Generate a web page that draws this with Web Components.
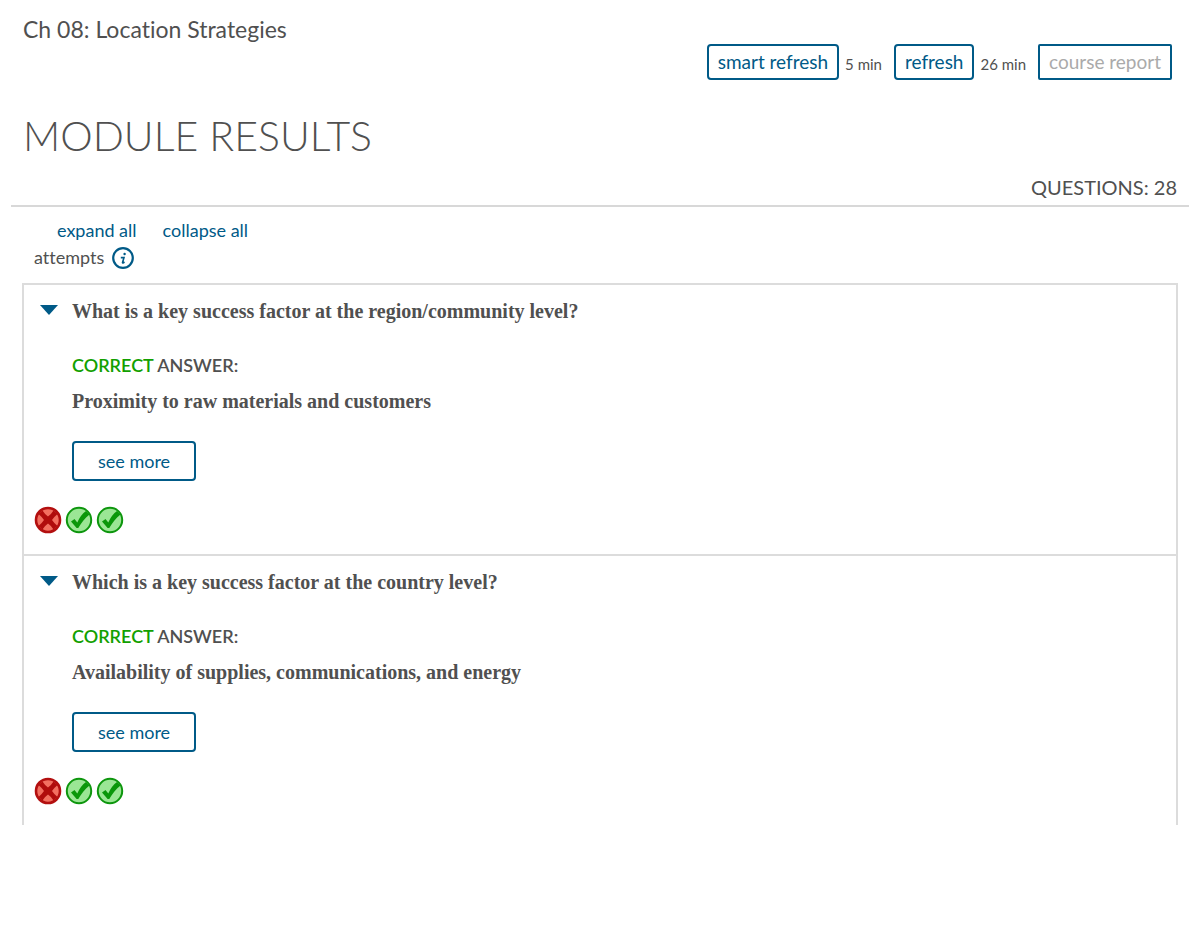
<!DOCTYPE html>
<html lang="en">
<head>
<meta charset="UTF-8">
<meta name="viewport" content="width=device-width, initial-scale=1">
<title>Module Results</title>
<style>
  body {
    margin: 0;
    background: #fff;
    color: #505050;
    font-family: Lato, "Liberation Sans", sans-serif;
    font-size: 18px;
    line-height: 24px;
    font-variant-ligatures: none;
    --blue: #005a87;
    --line: #dcdcdc;
    --green: #12a000;
  }
</style>
</head>
<body>
<module-results>
  <module-header slot="header" questions="28">
    <span slot="chapter">Ch 08: Location Strategies</span>
    <span slot="title">MODULE RESULTS</span>
    <outline-button slot="actions" note="5 min">smart refresh</outline-button>
    <outline-button slot="actions" note="26 min">refresh</outline-button>
    <outline-button slot="actions" disabled>course report</outline-button>
  </module-header>
  <list-controls slot="controls"></list-controls>
  <question-item attempts="wrong,right,right">
    <span slot="question">What is a key success factor at the region/community level?</span>
    <span slot="answer">Proximity to raw materials and customers</span>
  </question-item>
  <question-item attempts="wrong,right,right">
    <span slot="question">Which is a key success factor at the country level?</span>
    <span slot="answer">Availability of supplies, communications, and energy</span>
  </question-item>
</module-results>

<script>
class OutlineButton extends HTMLElement {
  constructor() {
    super();
    this.attachShadow({ mode: 'open' });
  }

  connectedCallback() {
    this.render();
  }

  render() {
    const note = this.getAttribute('note');
    const disabled = this.hasAttribute('disabled') ? 'disabled' : '';
    this.shadowRoot.innerHTML = `
      <style>
        :host {
          display: inline-flex;
          align-items: center;
          gap: 6px;
        }

        button {
          box-sizing: border-box;
          height: 36px;
          padding: 0 9px;
          border: 2px solid var(--blue);
          border-radius: 4px;
          background: #fff;
          color: var(--blue);
          font: inherit;
          font-size: 19px;
          font-variant-ligatures: none;
          cursor: pointer;
        }

        button:disabled {
          border-radius: 2px;
          color: #aaa;
          cursor: default;
        }

        :host([large]) button {
          height: 40px;
          padding: 0 24px;
          font-size: 18px;
        }

        .note {
          font-size: 15px;
          padding-top: 3px;
        }
      </style>
      <button type="button" ${disabled}><slot></slot></button>
      ${note ? `<span class="note">${note}</span>` : ''}
    `;
  }
}

class ModuleHeader extends HTMLElement {
  constructor() {
    super();
    this.attachShadow({ mode: 'open' });
  }

  connectedCallback() {
    this.render();
  }

  render() {
    this.shadowRoot.innerHTML = `
      <style>
        :host {
          display: block;
          padding: 14px 12px 6px;
          border-bottom: 2px solid #d8d8d8;
        }

        .chapter {
          font-size: 23px;
          line-height: 30px;
        }

        .actions {
          display: flex;
          flex-wrap: wrap;
          justify-content: flex-end;
          gap: 12px;
          padding-right: 5px;
        }

        h1 {
          margin: 28px 0 11px;
          font-size: 41px;
          line-height: 56px;
          font-weight: 300;
        }

        .count {
          font-size: 20px;
          line-height: 24px;
          text-align: right;
        }
      </style>
      <div class="chapter"><slot name="chapter"></slot></div>
      <div class="actions"><slot name="actions"></slot></div>
      <h1><slot name="title"></slot></h1>
      <div class="count">QUESTIONS: ${this.getAttribute('questions')}</div>
    `;
  }
}

class ListControls extends HTMLElement {
  constructor() {
    super();
    this.attachShadow({ mode: 'open' });
  }

  connectedCallback() {
    this.render();
    this.bindEvents();
  }

  bindEvents() {
    this.shadowRoot.querySelectorAll('a').forEach(link => {
      link.addEventListener('click', (e) => {
        e.preventDefault();
        const open = link.dataset.action === 'expand';
        this.dispatchEvent(new CustomEvent('toggleAll', { bubbles: true, detail: { open } }));
      });
    });
  }

  render() {
    this.shadowRoot.innerHTML = `
      <style>
        :host {
          display: block;
          padding: 11px 23px 14px;
        }

        .links {
          display: flex;
          gap: 26px;
          padding-left: 23px;
        }

        a {
          color: var(--blue);
          text-decoration: none;
        }

        .attempts {
          display: flex;
          align-items: center;
          gap: 8px;
          padding-top: 3px;
        }

        button {
          display: flex;
          padding: 2px 0 0;
          border: 0;
          background: none;
          cursor: pointer;
        }
      </style>
      <div class="links">
        <a href="#expand" data-action="expand">expand all</a>
        <a href="#collapse" data-action="collapse">collapse all</a>
      </div>
      <div class="attempts">
        <span>attempts</span>
        <button type="button" aria-label="About attempts">
          <svg width="22" height="22" viewBox="0 0 22 22" aria-hidden="true">
            <circle cx="11" cy="11" r="9.8" fill="#fff" stroke="#005a87" stroke-width="2.2"/>
            <circle cx="12.600" cy="7" r="1.2" fill="#005a87"/>
            <path d="M8.800 10.600h3.200l-1.500 5q-.1.900 2-.6" fill="none" stroke="#005a87" stroke-width="1.600"/>
          </svg>
        </button>
      </div>
    `;
  }
}

class AttemptIcon extends HTMLElement {
  constructor() {
    super();
    this.attachShadow({ mode: 'open' });
  }

  connectedCallback() {
    this.render();
  }

  render() {
    const right = this.getAttribute('result') === 'right';
    this.shadowRoot.innerHTML = `
      <style>
        :host {
          display: block;
          width: 28px;
          height: 28px;
        }

        svg {
          display: block;
        }
      </style>
      ${right ? `
        <svg width="28" height="28" viewBox="0 0 28 28" role="img" aria-label="Correct">
          <circle cx="14" cy="14" r="12.2" fill="#9be695" stroke="#0d960d" stroke-width="2"/>
          <path d="M6 15.500 9.500 13l2.800 3.500C14.500 11.500 17 8 21 5l3.500 3.500C19.500 12 16.500 17 13.300 22h-1.700Z" fill="#0a970a"/>
        </svg>
      ` : `
        <svg width="28" height="28" viewBox="0 0 28 28" role="img" aria-label="Incorrect">
          <circle cx="14" cy="14" r="12" fill="#f26f60" stroke="#b30f0f" stroke-width="2.600"/>
          <path d="M4.500 8 8.500 4.500Q11 8.500 14 10.500 17 8.500 19.500 4.500L23.500 8Q20 11 18 14 20 17 23.500 20L19.500 23.500Q17 19.500 14 17.500 11 19.500 8.500 23.500L4.500 20Q8 17 10 14 8 11 4.500 8Z" fill="#b00c0c"/>
        </svg>
      `}
    `;
  }
}

class QuestionItem extends HTMLElement {
  constructor() {
    super();
    this.attachShadow({ mode: 'open' });
  }

  connectedCallback() {
    this.render();
    this.bindEvents();
  }

  bindEvents() {
    this.shadowRoot.querySelector('.toggle').addEventListener('click', () => {
      this.setOpen(this.shadowRoot.querySelector('.body').hidden);
    });
  }

  setOpen(open) {
    this.shadowRoot.querySelector('.body').hidden = !open;
    this.shadowRoot.querySelector('.toggle').setAttribute('aria-expanded', open);
  }

  render() {
    const attempts = this.getAttribute('attempts').split(',');
    this.shadowRoot.innerHTML = `
      <style>
        :host {
          display: block;
          padding: 14px 10px 20px;
        }

        :host(:not(:last-child)) {
          border-bottom: 2px solid var(--line);
        }

        .head {
          display: grid;
          grid-template-columns: 38px 1fr;
        }

        .toggle {
          justify-self: start;
          align-self: start;
          display: flex;
          padding: 5px 6px;
          border: 0;
          background: none;
          cursor: pointer;
        }

        .toggle[aria-expanded="false"] svg {
          transform: rotate(-90deg);
        }

        h2, .answer {
          margin: 0;
          font-family: "Liberation Serif", serif;
          font-size: 20px;
          line-height: 24px;
          font-weight: 700;
        }

        .body {
          padding: 30px 0 0 38px;
        }

        .label {
          margin: 0 0 12px;
          font-weight: 600;
        }

        .correct {
          color: var(--green);
        }

        outline-button {
          display: flex;
          margin-top: 28px;
        }

        .attempts {
          display: flex;
          gap: 3px;
          margin-top: 25px;
        }
      </style>
      <div class="head">
        <button class="toggle" type="button" aria-label="Toggle answer" aria-expanded="true">
          <svg width="18" height="12" viewBox="0 0 18 12" aria-hidden="true">
            <path d="M0 1h18L9 11Z" fill="#005a87"/>
          </svg>
        </button>
        <h2><slot name="question"></slot></h2>
      </div>
      <div class="body">
        <p class="label"><span class="correct">CORRECT</span> ANSWER:</p>
        <p class="answer"><slot name="answer"></slot></p>
        <outline-button large>see more</outline-button>
      </div>
      <div class="attempts">
        ${attempts.map(result => `<attempt-icon result="${result}"></attempt-icon>`).join('')}
      </div>
    `;
  }
}

class ModuleResults extends HTMLElement {
  constructor() {
    super();
    this.attachShadow({ mode: 'open' });
  }

  connectedCallback() {
    this.render();
    this.addEventListener('toggleAll', (e) => {
      this.querySelectorAll('question-item').forEach(item => item.setOpen(e.detail.open));
    });
  }

  render() {
    this.shadowRoot.innerHTML = `
      <style>
        :host {
          display: block;
          padding: 0 11px;
        }

        .list {
          margin: 0 11px;
          border: 2px solid var(--line);
          border-bottom: 0;
        }
      </style>
      <slot name="header"></slot>
      <slot name="controls"></slot>
      <div class="list"><slot></slot></div>
    `;
  }
}

customElements.define('outline-button', OutlineButton);
customElements.define('attempt-icon', AttemptIcon);
customElements.define('module-header', ModuleHeader);
customElements.define('list-controls', ListControls);
customElements.define('question-item', QuestionItem);
customElements.define('module-results', ModuleResults);
</script>
</body>
</html>
